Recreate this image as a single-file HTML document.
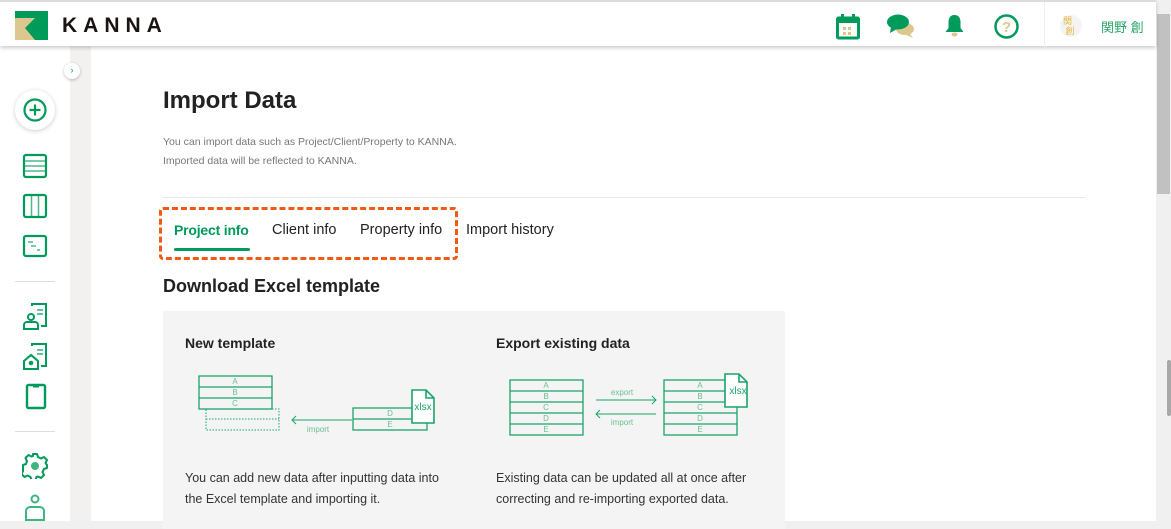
<!DOCTYPE html>
<html><head><meta charset="utf-8"><style>
*{margin:0;padding:0;box-sizing:border-box}
body{width:1171px;height:529px;overflow:hidden;background:#fff;font-family:"Liberation Sans","Noto Sans CJK JP",sans-serif;position:relative;color:#222}
.abs{position:absolute}
.g{color:#009a5a}
</style></head><body>
<div class="abs" style="left:70px;top:46px;width:21px;height:483px;background:#f2f1ef"></div>
<div class="abs" style="left:0;top:521px;width:1171px;height:8px;background:#f0f0f0"></div>
<div class="abs" style="left:1156px;top:0;width:15px;height:529px;background:#f0f0f0"></div>
<div class="abs" style="left:1157px;top:14px;width:13px;height:180px;background:#c1c1c1"></div>
<div class="abs" style="left:1167px;top:360px;width:4px;height:56px;background:#a8a8a8;border-radius:2px"></div>
<div class="abs" style="left:0;top:0;width:1156px;height:46px;background:#fff;border-top:2px solid #ddd;box-shadow:0 2px 4px rgba(0,0,0,.2)">
 <svg class="abs" style="left:15px;top:9px" width="33" height="29" viewBox="0 0 33 29"><rect width="33" height="29" fill="#009a5a"/><polygon points="0,7 20,7 10,17 20,29 0,29" fill="#dcc78e"/></svg>
 <div class="abs" style="left:62px;top:12px;font-size:21px;font-weight:bold;letter-spacing:6px;color:#1a1311">KANNA</div>
 <svg class="abs" style="left:836px;top:12px" width="24" height="26" viewBox="0 0 24 26"><rect x="1.5" y="4" width="21" height="20" rx="1" fill="none" stroke="#009a5a" stroke-width="3"/><rect x="1.5" y="4" width="21" height="5" fill="#009a5a"/><rect x="5" y="0" width="3" height="6" fill="#009a5a"/><rect x="16" y="0" width="3" height="6" fill="#009a5a"/><g fill="#d9c48a"><rect x="7" y="13" width="3" height="3"/><rect x="12" y="13" width="3" height="3"/><rect x="7" y="18" width="3" height="3"/><rect x="12" y="18" width="3" height="3"/></g></svg>
 <svg class="abs" style="left:887px;top:12px" width="28" height="24" viewBox="0 0 28 24"><ellipse cx="18" cy="15" rx="9" ry="6" fill="#dcc78e"/><path d="M22 19 L26 24 L17 20Z" fill="#dcc78e"/><ellipse cx="11" cy="8" rx="11" ry="7.5" fill="#009a5a"/><path d="M4 13 L3 19 L10 15Z" fill="#009a5a"/></svg>
 <svg class="abs" style="left:944px;top:12px" width="21" height="24" viewBox="0 0 21 24"><path d="M10.5 1c4 0 6 3 6 7v6l3 4H1.5l3-4V8c0-4 2-7 6-7z" fill="#009a5a"/><ellipse cx="10.5" cy="20.5" rx="3" ry="2" fill="#dcc78e"/></svg>
 <svg class="abs" style="left:994px;top:12px" width="25" height="25" viewBox="0 0 25 25"><circle cx="12.5" cy="12.5" r="11" fill="none" stroke="#009a5a" stroke-width="2.5"/><text x="12.5" y="18" text-anchor="middle" font-family="Liberation Sans" font-weight="bold" font-size="15" fill="#dcc78e">?</text></svg>
 <div class="abs" style="left:1044px;top:0;width:1px;height:46px;background:#eee"></div>
 <div class="abs" style="left:1060px;top:13px;width:22px;height:22px;border-radius:50%;background:#f4f4f4;font-size:9px;color:#e4b73a;line-height:10px;padding:1px 0 0 3px">関<br>&nbsp;創</div>
 <div class="abs" style="left:1101px;top:15px;font-size:13px;color:#2aa56a">関野 創</div>
</div>
<div class="abs" style="left:64px;top:63px;width:16px;height:16px;border-radius:50%;background:#fff;box-shadow:0 1px 3px rgba(0,0,0,.25);font-size:9px;color:#009a5a;text-align:center;line-height:15px">›</div>
<div class="abs" style="left:15px;top:90px;width:40px;height:40px;border-radius:50%;background:#fff;box-shadow:0 1px 5px rgba(0,0,0,.2)"></div>
<svg class="abs" style="left:23px;top:98px" width="24" height="24" viewBox="0 0 24 24" fill="none" stroke="#009a5a" stroke-width="2.2"><circle cx="12" cy="12" r="10.5"/><path d="M12 6.5v11M6.5 12h11"/></svg>
<svg class="abs" style="left:22px;top:153px" width="26" height="26" viewBox="0 0 26 26" fill="none" stroke="#009a5a" stroke-width="2.2"><rect x="2" y="2" width="22" height="22" rx="2"/><path d="M2 8h22M2 13h22M2 18h22" stroke-width="1.5" opacity=".7"/></svg>
<svg class="abs" style="left:22px;top:193px" width="26" height="26" viewBox="0 0 26 26" fill="none" stroke="#009a5a" stroke-width="2.2"><rect x="2" y="2" width="22" height="22" rx="2"/><path d="M9.5 2v22M16.5 2v22" stroke-width="1.5" opacity=".7"/></svg>
<svg class="abs" style="left:22px;top:234px" width="26" height="24" viewBox="0 0 26 24" fill="none" stroke="#009a5a" stroke-width="2.2"><rect x="2" y="2" width="22" height="20" rx="2"/><path d="M6 8h5M9 12h5M15 16h3" stroke-width="1.6" opacity=".7"/></svg>
<div class="abs" style="left:15px;top:281px;width:40px;height:1px;background:#ddd"></div>
<svg class="abs" style="left:22px;top:302px" width="26" height="28" viewBox="0 0 26 28" fill="none" stroke="#009a5a" stroke-width="2"><path d="M10 4V2h14v22h-5"/><path d="M15 8h6M15 12h6" opacity=".6"/><circle cx="9" cy="15" r="3"/><path d="M2 27v-4a3 3 0 0 1 3-3h8a3 3 0 0 1 3 3v4z"/></svg>
<svg class="abs" style="left:22px;top:342px" width="26" height="28" viewBox="0 0 26 28" fill="none" stroke="#009a5a" stroke-width="2"><path d="M10 4V2h14v22h-5"/><path d="M15 8h6M15 12h6" opacity=".6"/><path d="M2 27V19l7-6 7 6v8z"/><circle cx="9" cy="21" r="1.3" fill="#009a5a"/></svg>
<svg class="abs" style="left:25px;top:383px" width="22" height="27" viewBox="0 0 22 27" fill="none" stroke="#009a5a" stroke-width="2.4"><rect x="2" y="2" width="18" height="23" rx="1.5"/><path d="M8 3h6" stroke-width="3"/></svg>
<div class="abs" style="left:15px;top:431px;width:40px;height:1px;background:#ddd"></div>
<svg class="abs" style="left:22px;top:453px" width="26" height="26" viewBox="0 0 26 26"><path d="M11 1h4l1 3 3 1.5 3-1.5 3 3-1.5 3L25 12v3l-3 1-1.5 3 1.5 3-3 3-3-1.5-1.5.5-1 3h-4l-1-3-3-1.5-3 1.5-3-3 1.5-3L1 15v-3l3-1 1-3-1.5-3 3-3 3 1.5 1.5-.5z" fill="none" stroke="#009a5a" stroke-width="2" stroke-linejoin="round"/><circle cx="13" cy="13" r="4" fill="#3cb57e"/></svg>
<svg class="abs" style="left:24px;top:493px" width="22" height="28" viewBox="0 0 22 28" fill="none" stroke="#3cb57e" stroke-width="2"><circle cx="11" cy="6" r="3.5"/><path d="M2 27v-9a4 4 0 0 1 4-4h10a4 4 0 0 1 4 4v9z"/></svg>
<div class="abs" style="left:163px;top:87px;font-size:24px;font-weight:bold;color:#222">Import Data</div>
<div class="abs" style="left:163px;top:133px;font-size:10.5px;color:#777;line-height:19px">You can import data such as Project/Client/Property to KANNA.<br>Imported data will be reflected to KANNA.</div>
<div class="abs" style="left:163px;top:197px;width:922px;height:1px;background:#e8e8e8"></div>
<div class="abs" style="left:159px;top:207px;width:299px;height:53px;border:3px dashed #f05a14;border-radius:4px"></div>
<div class="abs g" style="left:174px;top:222px;font-size:14px;font-weight:bold;letter-spacing:-0.2px">Project info</div>
<div class="abs" style="left:174px;top:248px;width:76px;height:3px;border-radius:2px;background:#009a5a"></div>
<div class="abs" style="left:272px;top:222px;font-size:14.5px;color:#222">Client info</div>
<div class="abs" style="left:360px;top:222px;font-size:14.5px;color:#222">Property info</div>
<div class="abs" style="left:466px;top:222px;font-size:14.5px;color:#222">Import history</div>
<div class="abs" style="left:163px;top:276px;font-size:18px;font-weight:bold;color:#222">Download Excel template</div>
<div class="abs" style="left:163px;top:311px;width:622px;height:218px;background:#f4f4f4"></div>
<div class="abs" style="left:185px;top:335px;font-size:14px;font-weight:bold">New template</div>
<div class="abs" style="left:496px;top:335px;font-size:14px;font-weight:bold">Export existing data</div>
<svg class="abs" style="left:190px;top:370px" width="260" height="66" viewBox="0 0 260 66" font-family="Liberation Sans" font-size="8" fill="#6cbf8f" text-anchor="middle">
 <g fill="none" stroke="#1aa46a" stroke-width="1.3"><rect x="9" y="6" width="73" height="33"/><path d="M9 17h73M9 28h73"/></g>
 <text x="45" y="14">A</text><text x="45" y="25">B</text><text x="45" y="36">C</text>
 <g fill="none" stroke="#1aa46a" stroke-dasharray="1.5 1.5"><rect x="16" y="39" width="73" height="21"/><path d="M16 49h73"/></g>
 <path d="M162 50H102M106 46l-4 4 4 4" fill="none" stroke="#1aa46a"/><text x="128" y="62">import</text>
 <g fill="none" stroke="#1aa46a" stroke-width="1.3"><rect x="163" y="38" width="74" height="22" fill="#f4f4f4"/><path d="M163 49h74"/></g>
 <text x="200" y="46">D</text><text x="200" y="57">E</text>
 <path d="M222 20h14l8 8v25h-22z" fill="#fff" stroke="#1aa46a" stroke-width="1.6"/><path d="M236 20v8h8" fill="none" stroke="#1aa46a" stroke-width="1.6"/>
 <text x="233" y="40" font-size="10" fill="#1aa46a">xlsx</text>
</svg>
<svg class="abs" style="left:505px;top:370px" width="260" height="68" viewBox="0 0 260 68" font-family="Liberation Sans" font-size="8" fill="#6cbf8f" text-anchor="middle">
 <g fill="none" stroke="#1aa46a" stroke-width="1.3"><rect x="5" y="10" width="73" height="55"/><path d="M5 21h73M5 32h73M5 43h73M5 54h73"/>
 <rect x="159" y="10" width="73" height="55"/><path d="M159 21h73M159 32h73M159 43h73M159 54h73"/></g>
 <text x="41" y="18">A</text><text x="41" y="29">B</text><text x="41" y="40">C</text><text x="41" y="51">D</text><text x="41" y="62">E</text>
 <text x="195" y="18">A</text><text x="195" y="29">B</text><text x="195" y="40">C</text><text x="195" y="51">D</text><text x="195" y="62">E</text>
 <path d="M91 30h60M147 26l4 4-4 4M151 44H91M95 40l-4 4 4 4" fill="none" stroke="#1aa46a"/>
 <text x="117" y="25">export</text><text x="117" y="55">import</text>
 <path d="M220 4h14l8 8v25h-22z" fill="#fff" stroke="#1aa46a" stroke-width="1.6"/><path d="M234 4v8h8" fill="none" stroke="#1aa46a" stroke-width="1.6"/>
 <text x="233" y="24" font-size="10" fill="#1aa46a">xlsx</text>
</svg>
<div class="abs" style="left:185px;top:468px;font-size:12.5px;line-height:21px;color:#333">You can add new data after inputting data into<br>the Excel template and importing it.</div>
<div class="abs" style="left:496px;top:468px;font-size:12.5px;line-height:21px;color:#333">Existing data can be updated all at once after<br>correcting and re-importing exported data.</div>
</body></html>
